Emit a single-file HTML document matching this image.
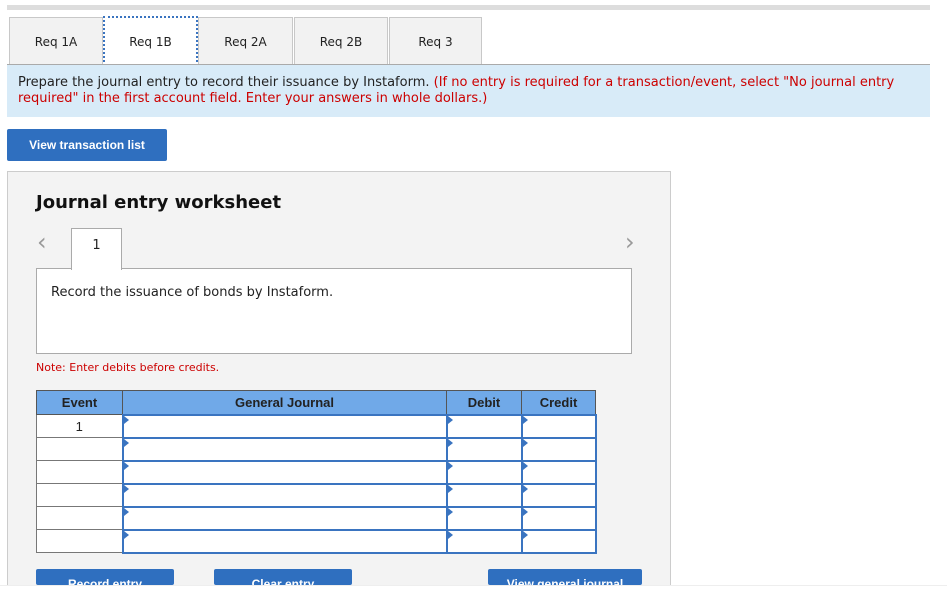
<!DOCTYPE html>
<html><head><style>
*{box-sizing:border-box;margin:0;padding:0}
html,body{width:947px;height:591px;overflow:hidden}
body{background:#fff;position:relative;font-family:"DejaVu Sans",Verdana,sans-serif;font-size:12px;color:#222}
.a{position:absolute}
.tab{position:absolute;top:17px;height:48px;background:#f2f2f2;border:1px solid #c8c8c8;border-bottom:none;text-align:center;line-height:48px;font-size:12px}
.btn{position:absolute;background:#2f6fbf;color:#fff;font-family:"Liberation Sans",Arial,sans-serif;font-weight:bold;font-size:12px;text-align:center;border-radius:2px;overflow:hidden}
table{border-collapse:collapse;position:absolute;left:36px;top:390px;font-family:"Liberation Sans",Arial,sans-serif;font-size:13px;table-layout:fixed;width:559px}
th{background:#70a9e8;border:1px solid #555;height:24px;font-weight:bold;color:#222}
td{border:1px solid #777;height:23px;background:#fff;padding:0;position:relative;text-align:center}
td.i{border:2px solid #3a74c0}
td.i:before{content:"";position:absolute;left:0;top:0;border-left:5px solid #3a74c0;border-top:4px solid transparent;border-bottom:4px solid transparent}
</style></head><body>
<div class="a" style="left:7px;top:5px;width:923px;height:5px;background:#ddd"></div>
<div class="tab" style="left:9px;width:94px">Req 1A</div>
<div class="tab" style="left:103px;width:95px;background:#fff;border:2px dotted #3a74c0;top:16px;height:50px;line-height:48px">Req 1B</div>
<div class="tab" style="left:198px;width:95px">Req 2A</div>
<div class="tab" style="left:294px;width:94px">Req 2B</div>
<div class="tab" style="left:389px;width:93px">Req 3</div>
<div class="a" style="left:7px;top:64px;width:923px;height:1px;background:#aaa"></div>
<div class="a" style="left:7px;top:65px;width:923px;height:52px;background:#d8ebf8;padding:10px 0 0 11px;font-size:13px;line-height:16px">Prepare the journal entry to record their issuance by Instaform. <span style="color:#c00">(If no entry is required for a transaction/event, select "No journal entry required" in the first account field. Enter your answers in whole dollars.)</span></div>
<div class="btn" style="left:7px;top:129px;width:160px;height:32px;line-height:32px">View transaction list</div>
<div class="a" style="left:7px;top:171px;width:664px;height:414px;background:#f3f3f3;border:1px solid #ccc;border-bottom:none"></div>
<div class="a" style="left:36px;top:192px;font-size:18px;font-weight:bold;color:#111">Journal entry worksheet</div>
<div class="a" style="left:37px;top:229px;font-size:24px;line-height:26px;color:#999">&#8249;</div>
<div class="a" style="left:625px;top:229px;font-size:24px;line-height:26px;color:#999">&#8250;</div>
<div class="a" style="left:36px;top:268px;width:596px;height:86px;background:#fff;border:1px solid #aaa;padding:16px 0 0 14px;font-size:13px">Record the issuance of bonds by Instaform.</div>
<div class="a" style="left:71px;top:228px;width:51px;height:42px;background:#fff;border:1px solid #aaa;border-bottom:none;text-align:center;padding-top:9px;font-size:13px">1</div>
<div class="a" style="left:36px;top:361px;font-size:11px;color:#c00">Note: Enter debits before credits.</div>
<table>
<colgroup><col style="width:86px"><col style="width:324px"><col style="width:75px"><col style="width:74px"></colgroup>
<tr><th>Event</th><th>General Journal</th><th>Debit</th><th>Credit</th></tr>
<tr><td>1</td><td class="i"></td><td class="i"></td><td class="i"></td></tr>
<tr><td></td><td class="i"></td><td class="i"></td><td class="i"></td></tr>
<tr><td></td><td class="i"></td><td class="i"></td><td class="i"></td></tr>
<tr><td></td><td class="i"></td><td class="i"></td><td class="i"></td></tr>
<tr><td></td><td class="i"></td><td class="i"></td><td class="i"></td></tr>
<tr><td></td><td class="i"></td><td class="i"></td><td class="i"></td></tr>
</table>
<div class="btn" style="left:36px;top:569px;width:138px;height:16px;line-height:30px">Record entry</div>
<div class="btn" style="left:214px;top:569px;width:138px;height:16px;line-height:30px">Clear entry</div>
<div class="btn" style="left:488px;top:569px;width:154px;height:16px;line-height:30px">View general journal</div>
<div class="a" style="left:0;top:585px;width:947px;height:6px;background:#fff;border-top:1px solid #eee"></div>
</body></html>
